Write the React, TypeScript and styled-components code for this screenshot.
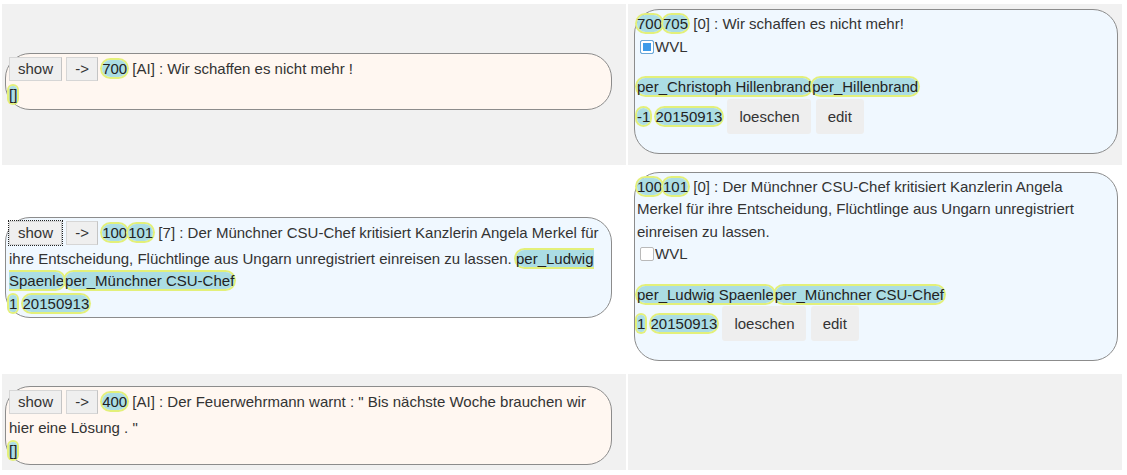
import React from "react";
import styled, { createGlobalStyle, css } from "styled-components";

const GlobalStyle = createGlobalStyle`
  body {
    margin: 0;
    background: #fff;
    font-family: "Liberation Sans", Arial, sans-serif;
    font-size: 15px;
    color: #333;
  }
`;

const Table = styled.table`
  width: 1124px;
  margin-top: 2px;
  border-spacing: 2px;
  table-layout: fixed;
`;

const Row = styled.tr<{ $shade?: boolean }>`
  background: ${(p) => (p.$shade ? "#f1f1f1" : "#fff")};
`;

const LeftCell = styled.td<{ $top?: number; $bottom?: number }>`
  box-sizing: border-box;
  width: 624px;
  padding: ${(p) => p.$top ?? 5}px 14px ${(p) => p.$bottom ?? 11}px 3px;
  vertical-align: middle;
`;

const RightCell = styled.td`
  box-sizing: border-box;
  width: 494px;
  padding: 5px 4px 11px 6px;
  vertical-align: middle;
`;

const Card = styled.div<{ $tone: "ai" | "doc" }>`
  border: 1px solid #8c8c8c;
  border-radius: 25px;
  background: ${(p) => (p.$tone === "ai" ? "#fff7f1" : "#f0f8ff")};
  line-height: 22.5px;
  padding: 3px 10px 2px 3px;
`;

const DocCard = styled(Card)`
  padding: 3px 8px 19px 2px;
`;

const Tok = styled.span`
  background: #abdde4;
  border-radius: 10px;
  box-shadow: 0 0 0 2px #e3f07a;
  color: #222;
  margin-right: 1px;
`;

const ToolButton = styled.button<{ $focus?: boolean }>`
  font: inherit;
  font-size: 15px;
  line-height: 18px;
  color: #333;
  background: #efefef;
  border: 1px solid #d6d6d6;
  border-right-color: #c4c4c4;
  padding: 2px 8px;
  margin: 0 0 3px;
  ${(p) =>
    p.$focus &&
    css`
      outline: 1px dotted #222;
    `}
`;

const ActionButton = styled.button`
  font: inherit;
  line-height: 17px;
  color: #333;
  background: #eee;
  border: 0;
  border-radius: 3px;
  padding: 9px 12px;
  margin: 0;
`;

const Line = styled.div<{ $gap?: number }>`
  margin-top: ${(p) => p.$gap ?? 0}px;
`;

const Check = styled.input`
  appearance: none;
  box-sizing: border-box;
  width: 14px;
  height: 14px;
  margin: 0 1px 0 3px;
  vertical-align: -2px;
  border: 1px solid #b9b9b9;
  border-radius: 2px;
  background: #fff;
  &:checked {
    border-color: #6aa6d6;
    background: #3d9be9;
    box-shadow: inset 0 0 0 2px #fff;
  }
`;

function Controls({ focus }: { focus?: boolean }) {
  return (
    <>
      <ToolButton $focus={focus}>show</ToolButton> <ToolButton>-&gt;</ToolButton>{" "}
    </>
  );
}

function Actions({ score }: { score: string }) {
  return (
    <Line>
      <Tok>{score}</Tok> <Tok>20150913</Tok> <ActionButton>loeschen</ActionButton>{" "}
      <ActionButton>edit</ActionButton>
    </Line>
  );
}

export default function App() {
  return (
    <>
      <GlobalStyle />
      <Table>
        <tbody>
          <Row $shade>
            <LeftCell>
              <Card $tone="ai">
                <Controls />
                <Tok>700</Tok> [AI] : Wir schaffen es nicht mehr !
                <br />
                <Tok>[]</Tok>
              </Card>
            </LeftCell>
            <RightCell>
              <DocCard $tone="doc">
                <Line>
                  <Tok>700</Tok>
                  <Tok>705</Tok> [0] : Wir schaffen es nicht mehr!
                </Line>
                <Line>
                  <Check type="checkbox" checked readOnly />
                  WVL
                </Line>
                <Line $gap={18}>
                  <Tok>per_Christoph Hillenbrand</Tok>
                  <Tok>per_Hillenbrand</Tok>
                </Line>
                <Actions score="-1" />
              </DocCard>
            </RightCell>
          </Row>
          <Row>
            <LeftCell $top={7}>
              <Card $tone="doc">
                <Controls focus />
                <Tok>100</Tok>
                <Tok>101</Tok> [7] : Der Münchner CSU-Chef kritisiert Kanzlerin Angela Merkel
                für ihre Entscheidung, Flüchtlinge aus Ungarn unregistriert einreisen zu lassen.{" "}
                <Tok>per_Ludwig Spaenle</Tok>
                <Tok>per_Münchner CSU-Chef</Tok>
                <br />
                <Tok>1</Tok> <Tok>20150913</Tok>
              </Card>
            </LeftCell>
            <RightCell>
              <DocCard $tone="doc">
                <Line>
                  <Tok>100</Tok>
                  <Tok>101</Tok> [0] : Der Münchner CSU-Chef kritisiert Kanzlerin Angela Merkel
                  für ihre Entscheidung, Flüchtlinge aus Ungarn unregistriert einreisen zu lassen.
                </Line>
                <Line>
                  <Check type="checkbox" readOnly />
                  WVL
                </Line>
                <Line $gap={18}>
                  <Tok>per_Ludwig Spaenle</Tok>
                  <Tok>per_Münchner CSU-Chef</Tok>
                </Line>
                <Actions score="1" />
              </DocCard>
            </RightCell>
          </Row>
          <Row $shade>
            <LeftCell $top={12} $bottom={5}>
              <Card $tone="ai">
                <Controls />
                <Tok>400</Tok> [AI] : Der Feuerwehrmann warnt : " Bis nächste Woche brauchen wir
                hier eine Lösung . "
                <br />
                <Tok>[]</Tok>
              </Card>
            </LeftCell>
            <RightCell />
          </Row>
        </tbody>
      </Table>
    </>
  );
}
